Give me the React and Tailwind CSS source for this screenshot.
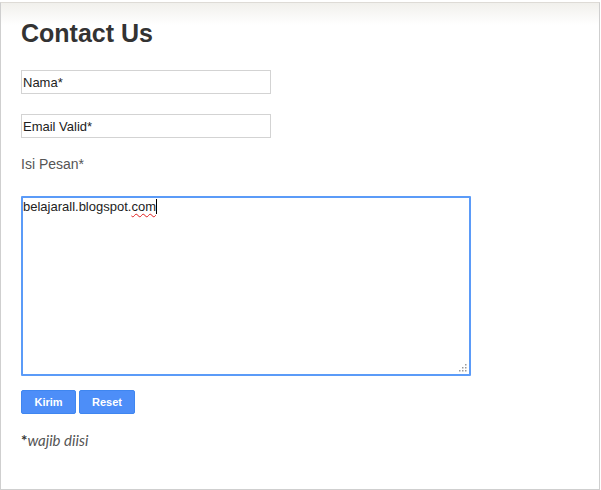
import React from 'react';

const ResizeGrip = () => (
  <svg width="9" height="9" viewBox="0 0 9 9" className="absolute bottom-[2px] right-[2px]">
    {[
      [7, 1], [7, 4], [4, 4], [7, 7], [4, 7], [1, 7],
    ].map(([x, y], i) => (
      <rect key={i} x={x} y={y} width="1.5" height="1.5" fill="#9a9a9a" />
    ))}
  </svg>
);

const App = () => {
  return (
    <div className="w-[601px] h-[490px] bg-white pt-[2px] font-['Liberation_Sans',Arial,sans-serif]">
      <div className="h-[488px] w-[600px] border border-[#cfcfcf] border-t-[#dedbd6] bg-[linear-gradient(to_bottom,#f1f0ec_0px,#ffffff_22px)] pl-[20px] pt-[16px]">
        <h1 className="text-[25px] leading-[28px] font-bold text-[#333]">Contact Us</h1>

        <form className="mt-[23px]" onSubmit={(e) => e.preventDefault()}>
          <input
            type="text"
            placeholder="Nama*"
            className="block w-[250px] h-[24px] border border-[#d3d3d3] px-[1px] text-[13px] text-[#222] placeholder:text-[#222] outline-none"
          />
          <input
            type="text"
            placeholder="Email Valid*"
            className="block mt-[20px] w-[250px] h-[24px] border border-[#d3d3d3] px-[1px] text-[13px] text-[#222] placeholder:text-[#222] outline-none"
          />

          <p className="mt-[18px] text-[14px] leading-[16px] text-[#555]">Isi Pesan*</p>

          <div className="relative mt-[24px] w-[450px] h-[180px] border-2 border-[#5b9bf8] rounded-[1px] pt-[1px] text-[13px] leading-[16px] text-[#222]">
            belajarall.blogspot.
            <span className="underline decoration-wavy decoration-[#e02020] decoration-1 underline-offset-2">com</span>
            <span className="inline-block w-[1px] h-[15px] bg-black align-[-3px]" />
            <ResizeGrip />
          </div>

          <div className="mt-[14px] flex gap-[3px]">
            <button
              type="submit"
              className="w-[55px] h-[24px] rounded-[2px] border border-[#3f86f0] bg-[#4d8ef8] text-white text-[11px] font-bold"
            >
              Kirim
            </button>
            <button
              type="reset"
              className="w-[56px] h-[24px] rounded-[2px] border border-[#3f86f0] bg-[#4d8ef8] text-white text-[11px] font-bold"
            >
              Reset
            </button>
          </div>

          <p className="mt-[17px] text-[15px] leading-[18px] text-[#555] font-['Lato',sans-serif] italic">
            <span className="not-italic font-bold text-[#333]">*</span>wajib diisi
          </p>
        </form>
      </div>
    </div>
  );
};

export default App;
